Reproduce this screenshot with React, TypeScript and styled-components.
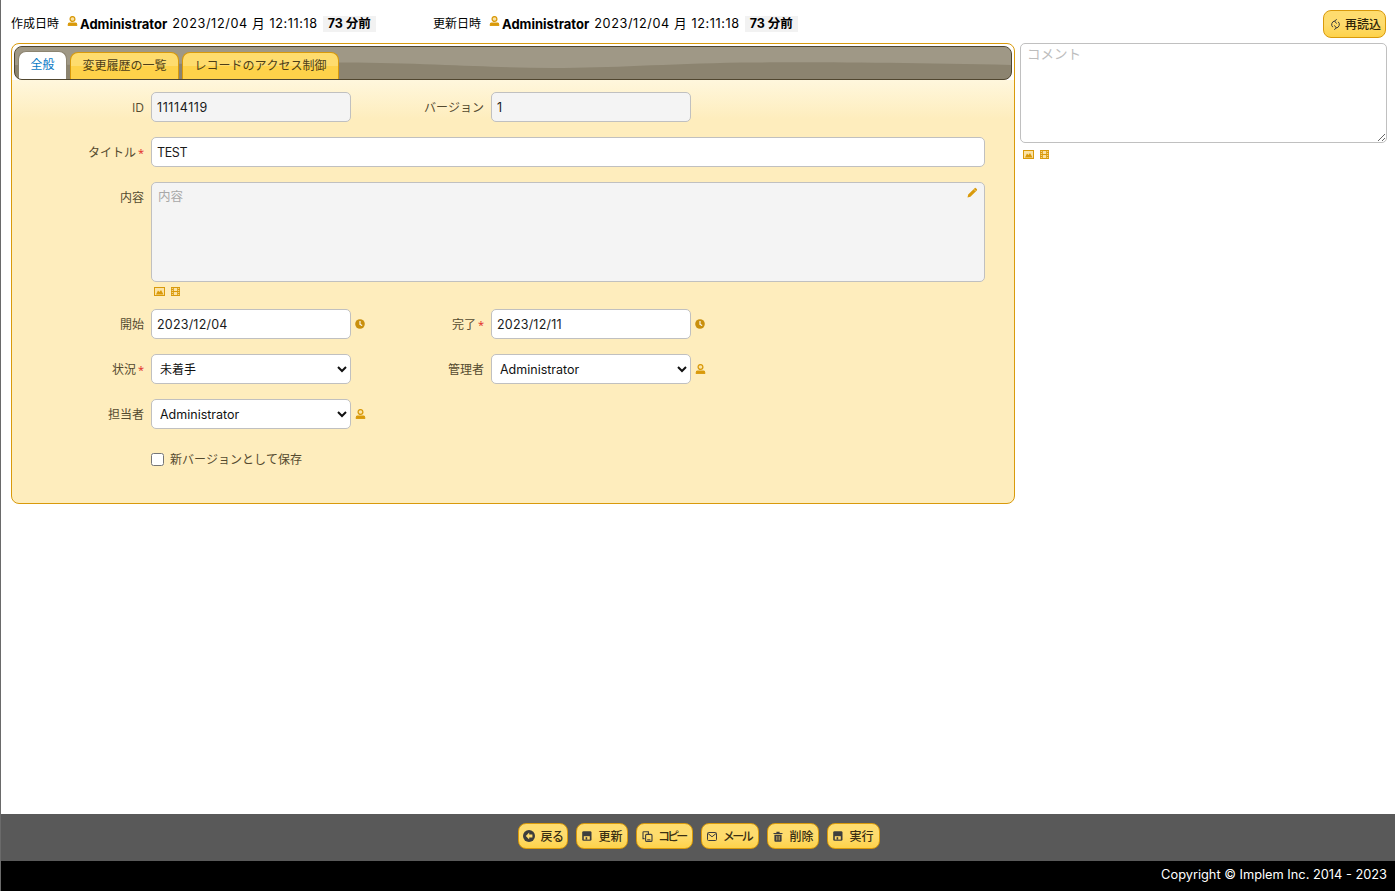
import React from "react";
import styled, { createGlobalStyle } from "styled-components";

const Global = createGlobalStyle`
  html, body { margin: 0; padding: 0; background: #fff; }
  body { font-family: "Open Sans", "Noto Sans CJK JP", sans-serif; font-size: 12px; color: #000; }
  * { box-sizing: border-box; }
`;

const FONT = `"Open Sans", "Noto Sans CJK JP", sans-serif`;
const LATIN = `Inter, "Noto Sans CJK JP", sans-serif`;
const ORANGE = "#d99a0b";

const Page = styled.div`
  height: 891px;
  display: flex;
  flex-direction: column;
  border-left: 1px solid #6a6a6a;
  overflow: hidden;
`;
const Content = styled.div`
  flex: 1;
  padding: 10px 8px 0 10px;
  min-height: 0;
`;
const TopBar = styled.div`
  height: 33px;
  display: flex;
  align-items: flex-start;
  justify-content: space-between;
  padding-right: 1px;
`;
const InfoGroup = styled.div`
  display: flex;
  height: 28px;
  align-items: center;
`;
const Info = styled.div<{ $w: number }>`
  width: ${(p) => p.$w}px;
  display: flex;
  align-items: center;
  white-space: nowrap;
  font-size: 12px;
  line-height: 16px;
`;
const InfoLabel = styled.span`
  margin-right: 8px;
`;
const RaisedIcon = styled.span`
  display: flex;
  position: relative;
  top: -3px;
  margin-right: 2px;
`;
const UserName = styled.span`
  font-family: ${LATIN};
  font-weight: 700;
  font-size: 13px;
  margin-right: 5px;
`;
const DateText = styled.span`
  font-family: ${LATIN};
  font-size: 12.7px;
  letter-spacing: 0.6px;
`;
const Ago = styled.span`
  background: #f2f2f2;
  font-family: ${LATIN};
  font-weight: 700;
  font-size: 12.5px;
  line-height: 16px;
  padding: 0 5px;
  margin-left: 5px;
`;
const Row = styled.div`
  display: flex;
  align-items: flex-start;
  gap: 5px;
`;
const Panel = styled.div`
  width: 1004px;
  height: 461px;
  border: 1px solid ${ORANGE};
  border-radius: 8px;
  padding: 2px;
  background: linear-gradient(#fff 36px, #fff7dd 36px, #feedbd 75px);
`;
const TabBar = styled.div`
  position: relative;
  height: 34px;
  border: 1px solid #50462f;
  border-radius: 8px;
  background: #8c8470;
  display: flex;
  align-items: flex-end;
  gap: 3px;
  padding-left: 3px;
  overflow: hidden;
`;
const Wave = styled.svg`
  position: absolute;
  inset: 0;
  width: 100%;
  height: 100%;
`;
const Tab = styled.div<{ $active?: boolean }>`
  position: relative;
  height: ${(p) => (p.$active ? 28 : 27)}px;
  padding: 0 11.5px 3px;
  font-size: 12px;
  font-kerning: none;
  display: flex;
  align-items: center;
  border: 1px solid ${(p) => (p.$active ? "#8c8470" : ORANGE)};
  border-bottom: 0;
  border-radius: 8px 8px 0 0;
  color: ${(p) => (p.$active ? "#0a78c4" : "#4d3e17")};
  background: ${(p) =>
    p.$active ? "#fff" : "linear-gradient(#fedc6e 50%, #fed24a 50%)"};
`;
const Form = styled.div`
  padding: 12px 0 0;
  display: flex;
  flex-direction: column;
`;
const FieldRow = styled.div<{ $mb?: number }>`
  display: flex;
  align-items: flex-start;
  margin-bottom: ${(p) => p.$mb ?? 15}px;
`;
const Field = styled.div<{ $label: number }>`
  display: flex;
  align-items: flex-start;
  & > label {
    width: ${(p) => p.$label}px;
  }
`;
const Label = styled.label`
  flex: none;
  height: 30px;
  text-align: right;
  padding-right: 7px;
  font-size: 12px;
  font-kerning: none;
  line-height: 31px;
  color: #544a2f;
  white-space: nowrap;
`;
const Req = styled.span`
  color: #e0241f;
  margin-left: 2px;
  font-size: 11px;
`;
const Input = styled.input<{ $w?: number; $ro?: boolean; $spacing?: number }>`
  width: ${(p) => p.$w ?? 200}px;
  height: 30px;
  border: 1px solid #c0c0c0;
  border-radius: 5px;
  padding: 0 5px;
  font-family: ${LATIN};
  font-size: 12.5px;
  letter-spacing: ${(p) => p.$spacing ?? 0}px;
  color: #1a1a1a;
  outline: none;
  background: ${(p) => (p.$ro ? "#f4f4f4" : "#fff")};
`;
const Select = styled.select<{ $latin?: boolean }>`
  width: 200px;
  height: 30px;
  border: 1px solid #c0c0c0;
  border-radius: 5px;
  padding: 0 4px;
  font-family: ${(p) => (p.$latin ? LATIN : FONT)};
  font-size: ${(p) => (p.$latin ? 12.5 : 12)}px;
  color: #111;
  background: #fff;
  outline: none;
`;
const Mark = styled.span`
  width: 14px;
  height: 30px;
  margin-left: 2px;
  display: flex;
  align-items: center;
  justify-content: center;
  flex: none;
`;
const MdBox = styled.div`
  position: relative;
  width: 834px;
  height: 100px;
  background: #f4f4f4;
  border: 1px solid #c0c0c0;
  border-radius: 5px;
  padding: 5px 6px;
  font-size: 12.5px;
  line-height: 18px;
  color: #a8a8a8;
`;
const Pencil = styled.span`
  position: absolute;
  top: 4px;
  right: 6px;
  display: flex;
`;
const MediaIcons = styled.div<{ $left: number; $top?: number; $bottom?: number }>`
  display: flex;
  gap: 6px;
  align-items: center;
  height: 12px;
  padding-left: ${(p) => p.$left}px;
  margin-top: ${(p) => p.$top ?? 0}px;
  margin-bottom: ${(p) => p.$bottom ?? 0}px;
`;
const CheckRow = styled.div`
  display: flex;
  align-items: center;
  margin: 0 0 0 137px;
  height: 20px;
  font-size: 12px;
  font-kerning: none;
  color: #544a2f;
`;
const Check = styled.input`
  width: 13px;
  height: 13px;
  margin: 0 6px 0 0;
`;
const Side = styled.div`
  flex: 1;
`;
const CommentBox = styled.textarea`
  display: block;
  width: 367px;
  height: 100px;
  border: 1px solid #c0c0c0;
  border-radius: 5px;
  padding: 1px 6px;
  font-family: ${FONT};
  font-size: 13.5px;
  line-height: 18px;
  outline: none;
  margin-bottom: 5px;
  &::placeholder { color: #bdbdbd; }
`;
const ReloadBtn = styled.button`
  width: 63px;
  height: 28px;
  display: inline-flex;
  align-items: center;
  gap: 4px;
  padding: 0 0 0 6px;
  border: 1px solid ${ORANGE};
  border-radius: 8px;
  background: linear-gradient(#fedc6e 50%, #fed24a);
  font-family: ${FONT};
  font-size: 12px;
  font-weight: 500;
  color: #2e2408;
  white-space: nowrap;
`;
const CmdBtn = styled.button<{ $w: number; $spacing?: number }>`
  width: ${(p) => p.$w}px;
  height: 26px;
  display: inline-flex;
  align-items: center;
  padding: 0;
  border: 1px solid ${ORANGE};
  border-radius: 8px;
  background: linear-gradient(#fedc6e 50%, #fed24a);
  font-family: ${FONT};
  font-size: 12px;
  font-weight: 500;
  font-feature-settings: "palt";
  letter-spacing: ${(p) => p.$spacing ?? 0}px;
  color: #3a2f12;
  white-space: nowrap;
`;
const IconSlot = styled.span`
  width: 21px;
  margin-right: 1px;
  flex: none;
  display: flex;
  align-items: center;
  justify-content: center;
`;
const CommandBar = styled.div`
  height: 47px;
  background: #595959;
  display: flex;
  justify-content: center;
  align-items: flex-start;
  gap: 8px;
  padding: 9px 0 0 1px;
  flex: none;
`;
const Foot = styled.div`
  height: 30px;
  flex: none;
  background: #000;
  color: #fff;
  font-family: ${LATIN};
  font-size: 12.8px;
  display: flex;
  align-items: center;
  justify-content: flex-end;
  padding: 0 8px 4px 0;
`;

const UserIcon = () => (
  <svg width="11" height="10" viewBox="0 0 11 10" fill="none">
    <circle cx="5.5" cy="3" r="2.4" fill="#fbe3a6" stroke={ORANGE} strokeWidth="1.3" />
    <path d="M1 9.4 L1.7 7 H9.3 L10 9.4 Z" fill={ORANGE} stroke={ORANGE} strokeWidth="1" />
  </svg>
);
const ClockIcon = () => (
  <svg width="10" height="10" viewBox="0 0 10 10">
    <circle cx="5" cy="5" r="4.8" fill="#c98f0c" />
    <path d="M5 2V5.4L7.2 6.6" stroke="#fff" strokeWidth="1.1" fill="none" />
  </svg>
);
const ImageIcon = () => (
  <svg width="11" height="9" viewBox="0 0 11 9">
    <rect x=".5" y=".5" width="10" height="8" fill="#fbe3a6" stroke={ORANGE} />
    <path d="M2 7.5 L4 3.5 L5.5 5 L7 3 L9.5 7.5Z" fill={ORANGE} />
  </svg>
);
const FilmIcon = () => (
  <svg width="9" height="9" viewBox="0 0 9 9">
    <rect width="9" height="9" fill={ORANGE} />
    <path d="M.8 1h1v1h-1zM.8 3h1v1h-1zM.8 5h1v1h-1zM.8 7h1v1h-1zM7.2 1h1v1h-1zM7.2 3h1v1h-1zM7.2 5h1v1h-1zM7.2 7h1v1h-1zM2.8 1h3.4v3H2.8zM2.8 5h3.4v3H2.8z" fill="#fbe3a6" />
  </svg>
);
const PencilIcon = () => (
  <svg width="11" height="11" viewBox="0 0 11 11">
    <path d="M0.5 10.5 L1.2 7.6 L7.6 1.2 a.9.9 0 0 1 1.3 0 L9.8 2.1 a.9.9 0 0 1 0 1.3 L3.4 9.8Z" fill="#d99a0b" />
    <path d="M6.8 2.2 L8.8 4.2" stroke="#fdecb9" strokeWidth=".6" />
  </svg>
);
const D = "#3d3d3d";
const ReloadIcon = () => (
  <svg width="11" height="11" viewBox="0 0 11 11" fill="none" stroke="#3a3a3a" strokeWidth="1">
    <path d="M4.8 2A3.6 3.6 0 0 0 2.8 8.2" />
    <path d="M6.2 9A3.6 3.6 0 0 0 8.2 2.8" />
    <path d="M6.6 4.6 L4.6 2 L6.8 .4" />
    <path d="M4.4 6.4 L6.4 9 L4.2 10.6" />
  </svg>
);
const BackIcon = () => (
  <svg width="12" height="12" viewBox="0 0 12 12">
    <circle cx="6" cy="6" r="6" fill={D} />
    <path d="M6.2 2.6 L2.8 6 L6.2 9.4 V7.4 H9.4 V4.6 H6.2Z" fill="#fedc6e" />
  </svg>
);
const SaveIcon = () => (
  <svg width="10" height="10" viewBox="0 0 10 10">
    <rect x=".2" y=".2" width="9.3" height="9.6" rx="1.4" fill={D} />
    <rect x="1.8" y="5.2" width="6" height="3.4" fill="#fed66a" />
    <rect x="3.6" y="6.2" width="1.6" height="2.4" fill={D} />
  </svg>
);
const CopyIcon = () => (
  <svg width="11" height="11" viewBox="0 0 11 11" fill="none" stroke={D} strokeWidth="1.1">
    <path d="M2.6 7.6H1V1.4a.6.6 0 0 1 .6-.6H6.4V3" />
    <rect x="3.6" y="3.4" width="6.4" height="7" rx="1" fill="#fedc6e" />
    <path d="M5.2 8.8H8.4" />
  </svg>
);
const MailIcon = () => (
  <svg width="10" height="9" viewBox="0 0 10 9" fill="none" stroke={D}>
    <rect x=".5" y=".5" width="9" height="8" rx="1" />
    <path d="M1 1.5 L5 4.8 L9 1.5" />
  </svg>
);
const TrashIcon = () => (
  <svg width="10" height="11" viewBox="0 0 10 11">
    <path d="M.5 2h9v1.1H.5zM3.4.7h3.2v1.3H3.4zM1.4 3.8h7.2v6a1 1 0 0 1-1 1H2.4a1 1 0 0 1-1-1z" fill={D} />
    <path d="M3.5 5v4.4M5 5v4.4M6.5 5v4.4" stroke="#fed66a" strokeWidth=".5" />
  </svg>
);

const commands = [
  { w: 50, text: "戻る", icon: <BackIcon /> },
  { w: 52, text: "更新", icon: <SaveIcon /> },
  { w: 57, text: "コピー", icon: <CopyIcon />, spacing: -2.4 },
  { w: 58, text: "メール", icon: <MailIcon />, spacing: -1.7 },
  { w: 52, text: "削除", icon: <TrashIcon /> },
  { w: 53, text: "実行", icon: <SaveIcon /> },
];

function Stamp({ label, w }: { label: string; w: number }) {
  return (
    <Info $w={w}>
      <InfoLabel>{label}</InfoLabel>
      <RaisedIcon><UserIcon /></RaisedIcon>
      <UserName>Administrator</UserName>
      <DateText>2023/12/04 月 12:11:18</DateText>
      <Ago>73 分前</Ago>
    </Info>
  );
}

export default function App() {
  return (
    <>
      <Global />
      <Page>
        <Content>
          <TopBar>
            <InfoGroup>
              <Stamp label="作成日時" w={422} />
              <Stamp label="更新日時" w={400} />
            </InfoGroup>
            <ReloadBtn>
              <ReloadIcon />
              再読込
            </ReloadBtn>
          </TopBar>
          <Row>
            <Panel>
              <TabBar>
                <Wave viewBox="0 0 1000 32" preserveAspectRatio="none">
                  <path d="M0 0H1000V18C900 16 800 15 730 15.5C650 17 600 21 540 21C480 21 420 16 330 15.5C200 16 100 18 0 18Z" fill="#9f9886" />
                </Wave>
                <Tab $active>全般</Tab>
                <Tab>変更履歴の一覧</Tab>
                <Tab>レコードのアクセス制御</Tab>
              </TabBar>
              <Form>
                <FieldRow>
                  <Field $label={137}>
                    <Label>ID</Label>
                    <Input $ro $spacing={0.6} readOnly value="11114119" />
                  </Field>
                  <Field $label={140}>
                    <Label>バージョン</Label>
                    <Input $ro readOnly value="1" />
                  </Field>
                </FieldRow>
                <FieldRow>
                  <Field $label={137}>
                    <Label>タイトル<Req>*</Req></Label>
                    <Input $w={834} $spacing={-0.4} readOnly value="TEST" />
                  </Field>
                </FieldRow>
                <FieldRow $mb={0}>
                  <Field $label={137}>
                    <Label>内容</Label>
                    <MdBox>
                      内容
                      <Pencil><PencilIcon /></Pencil>
                    </MdBox>
                  </Field>
                </FieldRow>
                <MediaIcons $left={140} $top={3} $bottom={12}>
                  <ImageIcon />
                  <FilmIcon />
                </MediaIcons>
                <FieldRow>
                  <Field $label={137}>
                    <Label>開始</Label>
                    <Input $spacing={0.2} readOnly value="2023/12/04" />
                    <Mark><ClockIcon /></Mark>
                  </Field>
                  <Field $label={124}>
                    <Label>完了<Req>*</Req></Label>
                    <Input $spacing={0.2} readOnly value="2023/12/11" />
                    <Mark><ClockIcon /></Mark>
                  </Field>
                </FieldRow>
                <FieldRow>
                  <Field $label={137}>
                    <Label>状況<Req>*</Req></Label>
                    <Select defaultValue="未着手"><option>未着手</option></Select>
                  </Field>
                  <Field $label={140}>
                    <Label>管理者</Label>
                    <Select $latin defaultValue="Administrator"><option>Administrator</option></Select>
                    <Mark><UserIcon /></Mark>
                  </Field>
                </FieldRow>
                <FieldRow $mb={20}>
                  <Field $label={137}>
                    <Label>担当者</Label>
                    <Select $latin defaultValue="Administrator"><option>Administrator</option></Select>
                    <Mark><UserIcon /></Mark>
                  </Field>
                </FieldRow>
                <CheckRow>
                  <Check type="checkbox" readOnly />
                  新バージョンとして保存
                </CheckRow>
              </Form>
            </Panel>
            <Side>
              <CommentBox placeholder="コメント" />
              <MediaIcons $left={3}>
                <ImageIcon />
                <FilmIcon />
              </MediaIcons>
            </Side>
          </Row>
        </Content>
        <CommandBar>
          {commands.map((c) => (
            <CmdBtn key={c.text} $w={c.w} $spacing={c.spacing}>
              <IconSlot>{c.icon}</IconSlot>
              {c.text}
            </CmdBtn>
          ))}
        </CommandBar>
        <Foot>Copyright © Implem Inc. 2014 - 2023</Foot>
      </Page>
    </>
  );
}
